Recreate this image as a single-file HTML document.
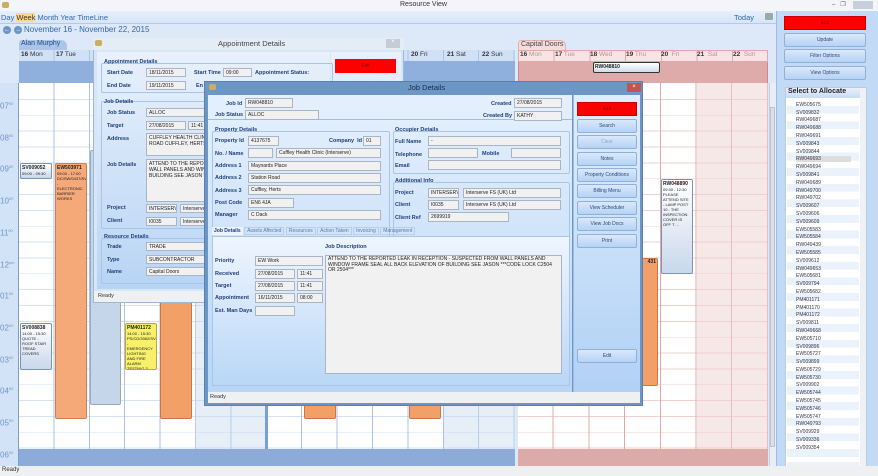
<!DOCTYPE html>
<html><head><meta charset="utf-8"><style>
*{margin:0;padding:0;box-sizing:border-box}
body{width:878px;height:476px;overflow:hidden;position:relative;background:#dde9f8;font-family:"Liberation Sans",sans-serif;color:#1e3a6a}
.a{position:absolute}
.t{font-size:5px;white-space:nowrap}
.lb{position:absolute;font-size:5.5px;font-weight:bold;color:#1f3f7a;white-space:nowrap}
.f{position:absolute;background:#f1f1f1;border:1px solid #a9b4c4;font-size:5px;color:#222;padding:1px 2px;white-space:nowrap;overflow:hidden;line-height:6px}
.btn{position:absolute;background:linear-gradient(#dbe9fb,#b5d2f5);border:1px solid #8fb0d8;border-radius:2px;font-size:5px;color:#2a4a7a;text-align:center;line-height:12px}
.grp{position:absolute;border:1px solid #a8c4e6;border-radius:2px}
.ev{position:absolute;border:1px solid #7c93b8;border-radius:2px;font-size:4px;color:#222;padding:1px;overflow:hidden;line-height:5px}
.ev b{font-size:5px}
.dh{position:absolute;top:51px;font-size:6.5px;color:#c09090;white-space:nowrap}
.dh b{color:#333}
</style></head><body>
<div class="a" style="left:0;top:0;width:878px;height:11px;background:#f3f5f8"></div>
<div class="a t" style="left:2px;top:2px;width:7px;height:6px;background:#c8b060;border-radius:2px"></div>
<div class="a" style="left:400px;top:1px;font-size:7px;color:#333">Resource View</div>
<div class="a" style="left:832px;top:1px;font-size:6px;color:#555">–&nbsp;&nbsp;&nbsp;❐</div>
<div class="a" style="left:853px;top:1px;width:20px;height:8px;background:#c6cfdb"></div>
<div class="a" style="left:0;top:11px;width:777px;height:13px;background:linear-gradient(#e7f0fc,#d5e5f9);border-bottom:1px solid #b3cbe9"></div>
<div class="a" style="left:1px;top:13px;font-size:7.5px;color:#3466a8">Day <span style="background:#fbd98a;color:#333">Week</span> Month Year TimeLine</div>
<div class="a" style="left:734px;top:13px;font-size:7.5px;color:#3466a8">Today</div>
<div class="a" style="left:765px;top:13px;width:8px;height:7px;background:#9aa;border-radius:1px"></div>
<div class="a" style="left:3px;top:26px;width:8px;height:8px;border-radius:50%;background:#6a95c9;color:#fff;font-size:6px;text-align:center;line-height:8px">←</div>
<div class="a" style="left:14px;top:26px;width:8px;height:8px;border-radius:50%;background:#6a95c9;color:#fff;font-size:6px;text-align:center;line-height:8px">→</div>
<div class="a" style="left:24px;top:25px;font-size:8px;color:#3466a8">November 16 - November 22, 2015</div>
<div class="a" style="left:0;top:83px;width:19px;height:383px;background:#d2e2f7;border-right:1px solid #7aa0d2"></div>
<div class="a" style="left:0;top:0;width:19px;height:476px;font-size:8px;color:#6e96c8">
<div class="a" style="top:101px">07<sup style="font-size:4px">00</sup></div>
<div class="a" style="top:133px">08<sup style="font-size:4px">00</sup></div>
<div class="a" style="top:164px">09<sup style="font-size:4px">00</sup></div>
<div class="a" style="top:196px">10<sup style="font-size:4px">00</sup></div>
<div class="a" style="top:228px">11<sup style="font-size:4px">00</sup></div>
<div class="a" style="top:260px">12<sup style="font-size:4px">pm</sup></div>
<div class="a" style="top:291px">01<sup style="font-size:4px">00</sup></div>
<div class="a" style="top:323px">02<sup style="font-size:4px">00</sup></div>
<div class="a" style="top:355px">03<sup style="font-size:4px">00</sup></div>
<div class="a" style="top:386px">04<sup style="font-size:4px">00</sup></div>
<div class="a" style="top:418px">05<sup style="font-size:4px">00</sup></div>
<div class="a" style="top:450px">06<sup style="font-size:4px">00</sup></div>
</div>
<div class="a" style="left:19px;top:83px;width:496px;height:383px;background-color:#fff;background-image:repeating-linear-gradient(90deg,transparent 0 34.4px,#a9c3e6 34.4px 35.4px),repeating-linear-gradient(180deg,transparent 0 15px,#d5e2f3 15px 15.85px);background-position:0 0,0 1px"></div>
<div class="a" style="left:195px;top:83px;width:71px;height:383px;background:rgba(200,218,240,.45)"></div>
<div class="a" style="left:444px;top:83px;width:71px;height:383px;background:rgba(200,218,240,.45)"></div>
<div class="a" style="left:265px;top:40px;width:3px;height:426px;background:#7aa0d2"></div>
<div class="a" style="left:19px;top:449px;width:496px;height:17px;background:#8cabd8"></div>
<div class="a" style="left:19px;top:40px;width:48px;height:10px;background:#aac5e8;border-radius:3px 6px 0 0;font-size:7px;color:#244c84;padding-left:2px">Alan Murphy</div>
<div class="a" style="left:19px;top:50px;width:496px;height:12px;background:#d0e0f5;border-bottom:1px solid #8fb0dc;background-image:repeating-linear-gradient(90deg,transparent 0 34.4px,#a9c3e6 34.4px 35.4px)"></div>
<div class="a" style="left:21px;top:51px;font-size:6.5px;color:#333"><b>16</b> Mon</div>
<div class="a" style="left:56px;top:51px;font-size:6.5px;color:#333"><b>17</b> Tue</div>
<div class="a" style="left:411px;top:51px;font-size:6.5px;color:#333"><b>20</b> Fri</div>
<div class="a" style="left:447px;top:51px;font-size:6.5px;color:#333"><b>21</b> Sat</div>
<div class="a" style="left:482px;top:51px;font-size:6.5px;color:#333"><b>22</b> Sun</div>
<div class="a" style="left:19px;top:62px;width:496px;height:21px;background:#8fb0dc"></div>
<div class="a" style="left:518px;top:83px;width:250px;height:383px;background-color:#fff;background-image:repeating-linear-gradient(90deg,transparent 0 34.7px,#e4a8a8 34.7px 35.7px),repeating-linear-gradient(180deg,transparent 0 15px,#efd0d0 15px 15.85px);background-position:0 0,0 1px"></div>
<div class="a" style="left:697px;top:83px;width:71px;height:383px;background:rgba(240,210,210,.5)"></div>
<div class="a" style="left:518px;top:449px;width:250px;height:17px;background:#ddaaaa"></div>
<div class="a" style="left:518px;top:40px;width:48px;height:10px;background:#f5dcdc;border:1px solid #e0b0b0;border-bottom:0;border-radius:3px 6px 0 0;font-size:7px;color:#444;padding-left:2px">Capital Doors</div>
<div class="a" style="left:518px;top:50px;width:250px;height:12px;background:#f8e4e4;border:1px solid #e0a8a8;background-image:repeating-linear-gradient(90deg,transparent 0 34.7px,#e4a8a8 34.7px 35.7px)"></div>
<div class="dh" style="left:520px"><b>16</b> Mon</div>
<div class="dh" style="left:555px"><b>17</b> Tue</div>
<div class="dh" style="left:590px"><b>18</b> Wed</div>
<div class="dh" style="left:626px"><b>19</b> Thu</div>
<div class="dh" style="left:661px"><b>20</b> &nbsp;Fri</div>
<div class="dh" style="left:697px"><b>21</b> &nbsp;Sat</div>
<div class="dh" style="left:733px"><b>22</b> &nbsp;Sun</div>
<div class="a" style="left:518px;top:62px;width:250px;height:21px;background:#dfaaaa;border-left:1px solid #d08888;border-right:1px solid #d08888"></div>
<div class="ev" style="left:593px;top:62px;width:67px;height:11px;background:linear-gradient(#fff,#cfdcec);border:1px solid #333;border-radius:2px"><b>RW048810</b></div>
<div class="a" style="left:769px;top:83px;width:7px;height:383px;background:#e8eef5;border-left:1px solid #ccd"></div>
<div class="a" style="left:770px;top:107px;width:5px;height:340px;background:#d8e0ea;border:1px solid #b8c4d4"></div>
<div class="ev" style="left:20px;top:163px;width:32px;height:16px;background:linear-gradient(#fff,#c9d8ec)"><b>SV009052</b><br>09:00 - 09:30</div>
<div class="ev" style="left:55px;top:163px;width:32px;height:256px;background:#f5a878;border-color:#d08050"><b>EW503971</b><br>09:00 - 17:00<br>DC/SW/0437/SV<br>-<br>ELECTRONIC<br>BARRIER<br>WORKS</div>
<div class="ev" style="left:90px;top:150px;width:31px;height:255px;background:#c6d6ea;border-color:#9ab"></div>
<div class="ev" style="left:20px;top:323px;width:32px;height:47px;background:linear-gradient(#fff,#c9d8ec)"><b>SV008838</b><br>14:00 - 15:30<br>QUOTE -<br>ROOF STAIR<br>TREAD<br>COVERS</div>
<div class="ev" style="left:125px;top:323px;width:32px;height:47px;background:#f8f06a;border-color:#bbaa33"><b>PM401172</b><br>14:00 - 15:30<br>PS/CD/3362/SVC<br>- EMERGENCY<br>LIGHTING<br>AND FIRE<br>ALARM<br>TESTING  3 ...</div>
<div class="ev" style="left:160px;top:290px;width:32px;height:129px;background:#f2a068;border-color:#c87848"></div>
<div class="ev" style="left:304px;top:395px;width:32px;height:24px;background:#f2a068;border-color:#c87848"></div>
<div class="ev" style="left:409px;top:395px;width:32px;height:24px;background:#f2a068;border-color:#c87848"></div>
<div class="ev" style="left:625px;top:258px;width:33px;height:128px;background:#f2a068;border-color:#c87848;font-size:4px"><b style="float:right">431</b></div>
<div class="ev" style="left:661px;top:179px;width:32px;height:95px;background:linear-gradient(#fff,#c9d8ec)"><b>RW048890</b><br>09:30 - 12:30<br>PLEASE<br>ATTEND SITE<br>- LAMP POST<br>10 - THE<br>INSPECTION<br>COVER IS<br>OFF T ...</div>
<div class="a" style="left:776px;top:11px;width:102px;height:455px;background:#c2daf5;border-left:1px solid #9dbbe0"></div>
<div class="a" style="left:784px;top:16px;width:82px;height:14px;background:#ff0000;border:1px solid #c00;font-size:5px;text-align:center;line-height:12px;color:#800">Exit</div>
<div class="btn" style="left:784px;top:33px;width:82px;height:14px">Update</div>
<div class="btn" style="left:784px;top:49px;width:82px;height:14px">Filter Options</div>
<div class="btn" style="left:784px;top:66px;width:82px;height:14px">View Options</div>
<div class="a" style="left:785px;top:87px;width:82px;height:384px;background:#fff;border:1px solid #b9cbe0"></div>
<div class="a" style="left:786px;top:88px;width:74px;height:10px;background:linear-gradient(#e9f1fb,#c8dbf2);font-size:7px;font-weight:bold;color:#223;padding-left:2px">Select to Allocate</div>
<div class="a" style="left:860px;top:88px;width:6px;height:382px;background:#eef2f6"></div>
<div class="a" style="left:787px;top:462px;width:72px;height:8px;background:#eef2f6"></div>
<div class="a" style="left:787px;top:98px;width:72px;height:362px;overflow:hidden;font-size:5px;color:#334;line-height:7.8px;background:repeating-linear-gradient(180deg,#fff 0 7.8px,#eaf2fc 7.8px 15.6px)">
<div style="padding-left:9px;margin-top:-4px">EW505674<br>EW505675<br>SV009832<br>RW049687<br>RW049688<br>RW049691<br>SV009843<br>SV009844<br><span style="background:#ddd;padding-right:30px">RW049693</span><br>RW049694<br>SV009841<br>RW049689<br>RW049700<br>RW049702<br>SV009607<br>SV009606<br>SV009609<br>EW505583<br>EW505584<br>RW049439<br>EW505585<br>SV009612<br>RW049653<br>EW505681<br>SV009794<br>EW505682<br>PM401171<br>PM401170<br>PM401172<br>SV009811<br>RW049668<br>EW505710<br>SV009896<br>EW505727<br>SV009899<br>EW505729<br>EW505730<br>SV009902<br>EW505744<br>EW505745<br>EW505746<br>EW505747<br>RW049793<br>SV009929<br>SV009336<br>SV009354</div></div>
<div class="a" style="left:0;top:466px;width:878px;height:10px;background:#eef0f2;font-size:6px;color:#333;padding:1px 2px">Ready</div>

<div class="a" style="left:93px;top:38px;width:311px;height:265px;background:#d6e6f9;border:1px solid #9fb6d4"></div>
<div class="a" style="left:93px;top:38px;width:311px;height:12px;background:#e4ecf5"></div>
<div class="a" style="left:95px;top:40px;width:7px;height:6px;background:#c8b060;border-radius:2px"></div>
<div class="a" style="left:218px;top:39px;font-size:7.5px;color:#444">Appointment Details</div>
<div class="a" style="left:386px;top:39px;width:14px;height:9px;background:#c6ccd6;font-size:6px;color:#fff;text-align:center">×</div>
<div class="a" style="left:97px;top:52px;width:233px;height:237px;background:linear-gradient(#e8f1fc,#b8d4f4)"></div>
<div class="a" style="left:331px;top:52px;width:70px;height:237px;background:linear-gradient(#e8f1fc,#bdd7f5)"></div>
<div class="a" style="left:335px;top:59px;width:61px;height:14px;background:#f00;font-size:5px;line-height:14px;text-align:center;color:#800">Exit</div>
<div class="grp" style="left:101px;top:63px;width:232px;height:30px"></div>
<div class="lb" style="left:104px;top:59px">Appointment Details</div>
<div class="lb" style="left:107px;top:70px">Start Date</div><div class="f" style="left:146px;top:68px;width:40px;height:9px">18/11/2015</div>
<div class="lb" style="left:194px;top:70px">Start Time</div><div class="f" style="left:223px;top:68px;width:29px;height:9px">09:00</div>
<div class="lb" style="left:255px;top:70px">Appointment Status:</div>
<div class="lb" style="left:107px;top:83px">End Date</div><div class="f" style="left:146px;top:81px;width:40px;height:9px">19/11/2015</div>
<div class="lb" style="left:196px;top:83px">En</div>
<div class="grp" style="left:101px;top:101px;width:232px;height:128px"></div>
<div class="lb" style="left:104px;top:99px">Job Details</div>
<div class="lb" style="left:107px;top:110px">Job Status</div><div class="f" style="left:146px;top:108px;width:70px;height:9px">ALLOC</div>
<div class="lb" style="left:107px;top:123px">Target</div><div class="f" style="left:146px;top:121px;width:40px;height:9px">27/08/2015</div><div class="f" style="left:188px;top:121px;width:30px;height:9px">11:41</div>
<div class="lb" style="left:107px;top:136px">Address</div><div class="f" style="left:146px;top:133px;width:70px;height:23px">CUFFLEY HEALTH CLINIC<br>ROAD CUFFLEY, HERTS E</div>
<div class="lb" style="left:107px;top:162px">Job Details</div><div class="f" style="left:146px;top:159px;width:70px;height:43px">ATTEND TO THE REPORT<br>WALL PANELS AND WIND<br>BUILDING SEE JASON ***</div>
<div class="lb" style="left:107px;top:205px">Project</div><div class="f" style="left:146px;top:204px;width:31px;height:9px">INTERSERVE</div><div class="f" style="left:180px;top:204px;width:36px;height:9px">Interserve</div>
<div class="lb" style="left:107px;top:218px">Client</div><div class="f" style="left:146px;top:217px;width:31px;height:9px">I0035</div><div class="f" style="left:180px;top:217px;width:36px;height:9px">Interserve</div>
<div class="grp" style="left:101px;top:238px;width:232px;height:46px"></div>
<div class="lb" style="left:104px;top:234px">Resource Details</div>
<div class="lb" style="left:107px;top:244px">Trade</div><div class="f" style="left:146px;top:242px;width:70px;height:9px">TRADE</div>
<div class="lb" style="left:107px;top:257px">Type</div><div class="f" style="left:146px;top:255px;width:70px;height:9px">SUBCONTRACTOR</div>
<div class="lb" style="left:107px;top:269px">Name</div><div class="f" style="left:146px;top:267px;width:70px;height:9px">Capital Doors</div>
<div class="a" style="left:94px;top:291px;width:309px;height:11px;background:#eef0f2;font-size:5.5px;color:#333;padding:2px 4px">Ready</div>

<div class="a" style="left:204px;top:81px;width:439px;height:325px;background:#6c96c6;border:1px solid #5a80ad"></div>
<div class="a" style="left:209px;top:84px;width:7px;height:6px;background:#c8b060;border-radius:2px"></div>
<div class="a" style="left:408px;top:83px;font-size:7.5px;color:#1c2c44">Job Details</div>
<div class="a" style="left:627px;top:83px;width:14px;height:9px;background:#c75050;font-size:6px;color:#fff;text-align:center;line-height:9px">×</div>
<div class="a" style="left:208px;top:95px;width:364px;height:297px;background:linear-gradient(#e5f0fd,#b9d6f7)"></div>
<div class="a" style="left:573px;top:95px;width:67px;height:297px;background:linear-gradient(#e1eefc,#b1d1f5);border-left:1px solid #9fbde2"></div>
<div class="a" style="left:208px;top:119px;width:364px;height:1px;background:#9fbde2"></div>
<div class="lb" style="left:226px;top:101px">Job Id</div><div class="f" style="left:245px;top:98px;width:48px;height:10px">RW048810</div>
<div class="lb" style="left:215px;top:112px">Job Status</div><div class="f" style="left:245px;top:110px;width:74px;height:10px">ALLOC</div>
<div class="lb" style="left:491px;top:101px">Created</div><div class="f" style="left:514px;top:98px;width:48px;height:10px">27/08/2015</div>
<div class="lb" style="left:483px;top:113px">Created By</div><div class="f" style="left:514px;top:111px;width:48px;height:10px">KATHY</div>
<div class="grp" style="left:212px;top:131px;width:178px;height:121px"></div>
<div class="lb" style="left:215px;top:127px">Property Details</div>
<div class="lb" style="left:215px;top:138px">Property Id</div><div class="f" style="left:248px;top:136px;width:31px;height:10px">4137675</div>
<div class="lb" style="left:329px;top:138px">Company &nbsp;Id</div><div class="f" style="left:363px;top:136px;width:18px;height:10px">01</div>
<div class="lb" style="left:215px;top:151px">No. / Name</div><div class="f" style="left:248px;top:148px;width:25px;height:10px"></div><div class="f" style="left:276px;top:148px;width:105px;height:10px">Cuffley Health Clinic (Interserve)</div>
<div class="lb" style="left:215px;top:163px">Address 1</div><div class="f" style="left:248px;top:161px;width:133px;height:10px">Maynards Place</div>
<div class="lb" style="left:215px;top:175px">Address 2</div><div class="f" style="left:248px;top:173px;width:133px;height:10px">Station Road</div>
<div class="lb" style="left:215px;top:188px">Address 3</div><div class="f" style="left:248px;top:185px;width:133px;height:10px">Cuffley, Herts</div>
<div class="lb" style="left:215px;top:200px">Post Code</div><div class="f" style="left:248px;top:198px;width:46px;height:10px">EN6 4JA</div>
<div class="lb" style="left:215px;top:212px">Manager</div><div class="f" style="left:248px;top:210px;width:133px;height:10px">C Dack</div>
<div class="grp" style="left:393px;top:131px;width:177px;height:43px"></div>
<div class="lb" style="left:395px;top:127px">Occupier Details</div>
<div class="lb" style="left:395px;top:139px">Full Name</div><div class="f" style="left:428px;top:136px;width:133px;height:10px">-</div>
<div class="lb" style="left:395px;top:152px">Telephone</div><div class="f" style="left:428px;top:148px;width:50px;height:10px"></div>
<div class="lb" style="left:482px;top:151px">Mobile</div><div class="f" style="left:511px;top:148px;width:50px;height:10px"></div>
<div class="lb" style="left:395px;top:163px">Email</div><div class="f" style="left:428px;top:160px;width:133px;height:10px"></div>
<div class="grp" style="left:393px;top:182px;width:177px;height:69px"></div>
<div class="lb" style="left:395px;top:178px">Additional Info</div>
<div class="lb" style="left:395px;top:190px">Project</div><div class="f" style="left:428px;top:188px;width:31px;height:10px">INTERSERVE</div><div class="f" style="left:463px;top:188px;width:98px;height:10px">Interserve FS (UK) Ltd</div>
<div class="lb" style="left:395px;top:202px">Client</div><div class="f" style="left:428px;top:200px;width:31px;height:10px">I0035</div><div class="f" style="left:463px;top:200px;width:98px;height:10px">Interserve FS (UK) Ltd</div>
<div class="lb" style="left:395px;top:215px">Client Ref</div><div class="f" style="left:428px;top:212px;width:81px;height:10px">2699919</div>
<div class="a" style="left:212px;top:228px;font-size:5px;color:#5a7aa8;white-space:nowrap"><span style="background:#eaf3fe;color:#1f3f7a;font-weight:bold;padding:1px 2px">Job Details</span> <span style="padding:0 2px;border:1px solid #b8cfea">Assets Affected</span> <span style="padding:0 2px;border:1px solid #b8cfea">Resources</span> <span style="padding:0 2px;border:1px solid #b8cfea">Action Taken</span> <span style="padding:0 2px;border:1px solid #b8cfea">Invoicing</span> <span style="padding:0 2px;border:1px solid #b8cfea">Management</span></div>
<div class="a" style="left:212px;top:236px;width:358px;height:150px;background:linear-gradient(#eef5fe,#bad7f7);border:1px solid #a8c4e6"></div>
<div class="lb" style="left:325px;top:244px">Job Description</div>
<div class="lb" style="left:215px;top:258px">Priority</div><div class="f" style="left:255px;top:256px;width:68px;height:10px">EW Work</div>
<div class="lb" style="left:215px;top:271px">Received</div><div class="f" style="left:255px;top:269px;width:40px;height:10px">27/08/2015</div><div class="f" style="left:297px;top:269px;width:26px;height:10px">11:41</div>
<div class="lb" style="left:215px;top:283px">Target</div><div class="f" style="left:255px;top:281px;width:40px;height:10px">27/08/2015</div><div class="f" style="left:297px;top:281px;width:26px;height:10px">11:41</div>
<div class="lb" style="left:215px;top:295px">Appointment</div><div class="f" style="left:255px;top:293px;width:40px;height:10px">16/11/2015</div><div class="f" style="left:297px;top:293px;width:26px;height:10px">08:00</div>
<div class="lb" style="left:215px;top:308px">Est. Man Days</div><div class="f" style="left:255px;top:306px;width:40px;height:10px"></div>
<div class="f" style="left:325px;top:255px;width:237px;height:119px;white-space:normal;line-height:5.5px">ATTEND TO THE REPORTED LEAK IN RECEPTION - SUSPECTED FROM WALL PANELS AND WINDOW FRAME SEAL ALL BACK ELEVATION OF BUILDING SEE JASON ***CODE LOCK C2504 OR 2504***</div>
<div class="a" style="left:577px;top:102px;width:60px;height:14px;background:#f00;border:1px solid #c00;font-size:5px;line-height:12px;text-align:center;color:#800">Exit</div>
<div class="btn" style="left:577px;top:119px;width:60px;height:14px">Search</div>
<div class="btn" style="left:577px;top:135px;width:60px;height:14px;color:#9ab">Clear</div>
<div class="btn" style="left:577px;top:152px;width:60px;height:14px">Notes</div>
<div class="btn" style="left:577px;top:168px;width:60px;height:14px">Property Conditions</div>
<div class="btn" style="left:577px;top:184px;width:60px;height:14px">Billing Menu</div>
<div class="btn" style="left:577px;top:201px;width:60px;height:14px">View Scheduler</div>
<div class="btn" style="left:577px;top:217px;width:60px;height:14px">View Job Docs</div>
<div class="btn" style="left:577px;top:234px;width:60px;height:14px">Print</div>
<div class="btn" style="left:577px;top:349px;width:60px;height:14px">Edit</div>
<div class="a" style="left:208px;top:392px;width:432px;height:11px;background:#eef0f2;font-size:5.5px;color:#333;padding:2px 2px">Ready</div>
</body></html>
